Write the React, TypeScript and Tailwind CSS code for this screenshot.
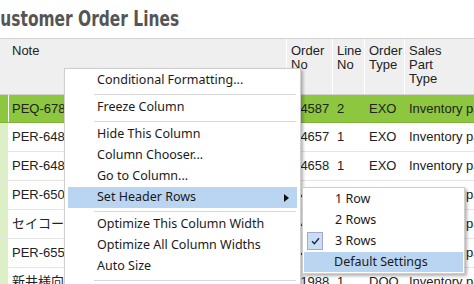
import React from "react";

type Row = {
  note: string;
  orderNo: string;
  lineNo: string;
  orderType: string;
  partType: string;
  selected?: boolean;
};

const rows: Row[] = [
  { note: "PEQ-6780 Bracket", orderNo: "C4587", lineNo: "2", orderType: "EXO", partType: "Inventory part", selected: true },
  { note: "PER-6481 Spare", orderNo: "C4657", lineNo: "1", orderType: "EXO", partType: "Inventory part" },
  { note: "PER-6482 Spare", orderNo: "C4658", lineNo: "1", orderType: "EXO", partType: "Inventory part" },
  { note: "PER-6503 Repair", orderNo: "C4720", lineNo: "1", orderType: "EXO", partType: "Inventory part" },
  { note: "セイコーメテック", orderNo: "C4731", lineNo: "1", orderType: "EXO", partType: "Inventory part" },
  { note: "PER-6554 Spare", orderNo: "C4802", lineNo: "1", orderType: "EXO", partType: "Inventory part" },
  { note: "新井様向け", orderNo: "C1988", lineNo: "1", orderType: "DOO", partType: "Inventory part" },
];

function Separator() {
  return (
    <div className="h-[6px] flex items-center pl-[29px] pr-[4px]">
      <div className="h-px w-full bg-[#d7d7d7]" />
    </div>
  );
}

function MenuItem({ label, active, arrow }: { label: string; active?: boolean; arrow?: boolean }) {
  return (
    <div
      className={
        "h-[21px] flex items-center pl-[29px] pr-[8px] mx-[3px] " +
        (active ? "bg-[#b9d5f1]" : "")
      }
    >
      <span className="flex-1 whitespace-nowrap">{label}</span>
      {arrow && (
        <svg width="5" height="8" viewBox="0 0 5 8">
          <path d="M0 0 L5 4 L0 8 Z" fill="#111" />
        </svg>
      )}
    </div>
  );
}

export default function App() {
  return (
    <div className="relative w-[474px] h-[284px] overflow-hidden bg-white text-[#222] font-['Liberation_Sans',Arial,sans-serif]">
      {/* title */}
      <div className="h-[38px] pt-[5px] overflow-hidden">
        <div className="ml-[-11px] origin-left scale-x-[0.78] whitespace-nowrap text-[22px] leading-[28px] font-bold text-[#555] font-['DejaVu_Sans_Condensed',sans-serif]">
          Customer Order Lines
        </div>
      </div>

      {/* header */}
      <div className="flex h-[57px] border-t border-b border-[#d2d2d2] bg-[#efefef] text-[13px] leading-[14px] text-[#222]">
        <div className="w-[9px]" />
        <div className="w-[278px] pl-[3px] pt-[5px] border-r border-white">Note</div>
        <div className="w-[46px] pl-[4px] pt-[5px] border-r border-white">Order<br />No</div>
        <div className="w-[32px] pl-[4px] pt-[5px] border-r border-white">Line<br />No</div>
        <div className="w-[40px] pl-[4px] pt-[5px] border-r border-white">Order<br />Type</div>
        <div className="flex-1 pl-[4px] pt-[5px]">Sales<br />Part<br />Type</div>
      </div>

      {/* rows */}
      {rows.map((r, i) => (
        <div
          key={i}
          className={
            "flex items-center text-[13px] border-b " +
            (r.selected ? "h-[28px] bg-[#8dc63f] border-[#7fb436]" : "h-[29px] bg-white border-[#e6e6e6]")
          }
        >
          <div className={"w-[9px] h-full border-r border-white " + (r.selected ? "bg-[#8dc63f]" : "bg-[#dcefc6]")} />
          <div className="w-[278px] pl-[3px] whitespace-nowrap overflow-hidden font-['Liberation_Sans','Noto_Sans_CJK_JP',sans-serif]">
            {r.note}
          </div>
          <div className="w-[46px] pl-[4px] whitespace-nowrap overflow-hidden">{r.orderNo}</div>
          <div className="w-[32px] pl-[4px]">{r.lineNo}</div>
          <div className="w-[40px] pl-[4px]">{r.orderType}</div>
          <div className="flex-1 pl-[4px] whitespace-nowrap overflow-hidden">{r.partType}</div>
        </div>
      ))}

      {/* context menu */}
      <div className="absolute left-[64px] top-[68px] w-[237px] bg-white border border-[#cfcfcf] shadow-[2px_2px_3px_rgba(0,0,0,0.3)] py-[1px] text-[12.5px] text-[#1a1a1a] font-['Noto_Sans',sans-serif]">
        <MenuItem label="Conditional Formatting..." />
        <Separator />
        <MenuItem label="Freeze Column" />
        <Separator />
        <MenuItem label="Hide This Column" />
        <MenuItem label="Column Chooser..." />
        <MenuItem label="Go to Column..." />
        <MenuItem label="Set Header Rows" active arrow />
        <Separator />
        <MenuItem label="Optimize This Column Width" />
        <MenuItem label="Optimize All Column Widths" />
        <MenuItem label="Auto Size" />
        <Separator />
      </div>

      {/* submenu */}
      <div className="absolute left-[302px] top-[187px] w-[163px] bg-white border border-[#cfcfcf] shadow-[2px_2px_3px_rgba(0,0,0,0.3)] p-[1px] text-[12.5px] text-[#1a1a1a] font-['Noto_Sans',sans-serif]">
        <div className="h-[21px] flex items-center pl-[31px]">1 Row</div>
        <div className="h-[21px] flex items-center pl-[31px]">2 Rows</div>
        <div className="h-[21px] flex items-center relative pl-[31px]">
          <div className="absolute left-[3px] top-[1px] w-[16px] h-[18px] bg-[#c9def5] border border-[#a7a4d8] flex items-center justify-center">
            <svg width="9" height="8" viewBox="0 0 9 8">
              <path d="M1 4.2 L3.4 6.6 L8 1.2" fill="none" stroke="#1d2a4a" strokeWidth="1.4" />
            </svg>
          </div>
          3 Rows
        </div>
        <div className="h-[20px] flex items-center pl-[30px] bg-[#b9d5f1]">Default Settings</div>
      </div>
    </div>
  );
}
